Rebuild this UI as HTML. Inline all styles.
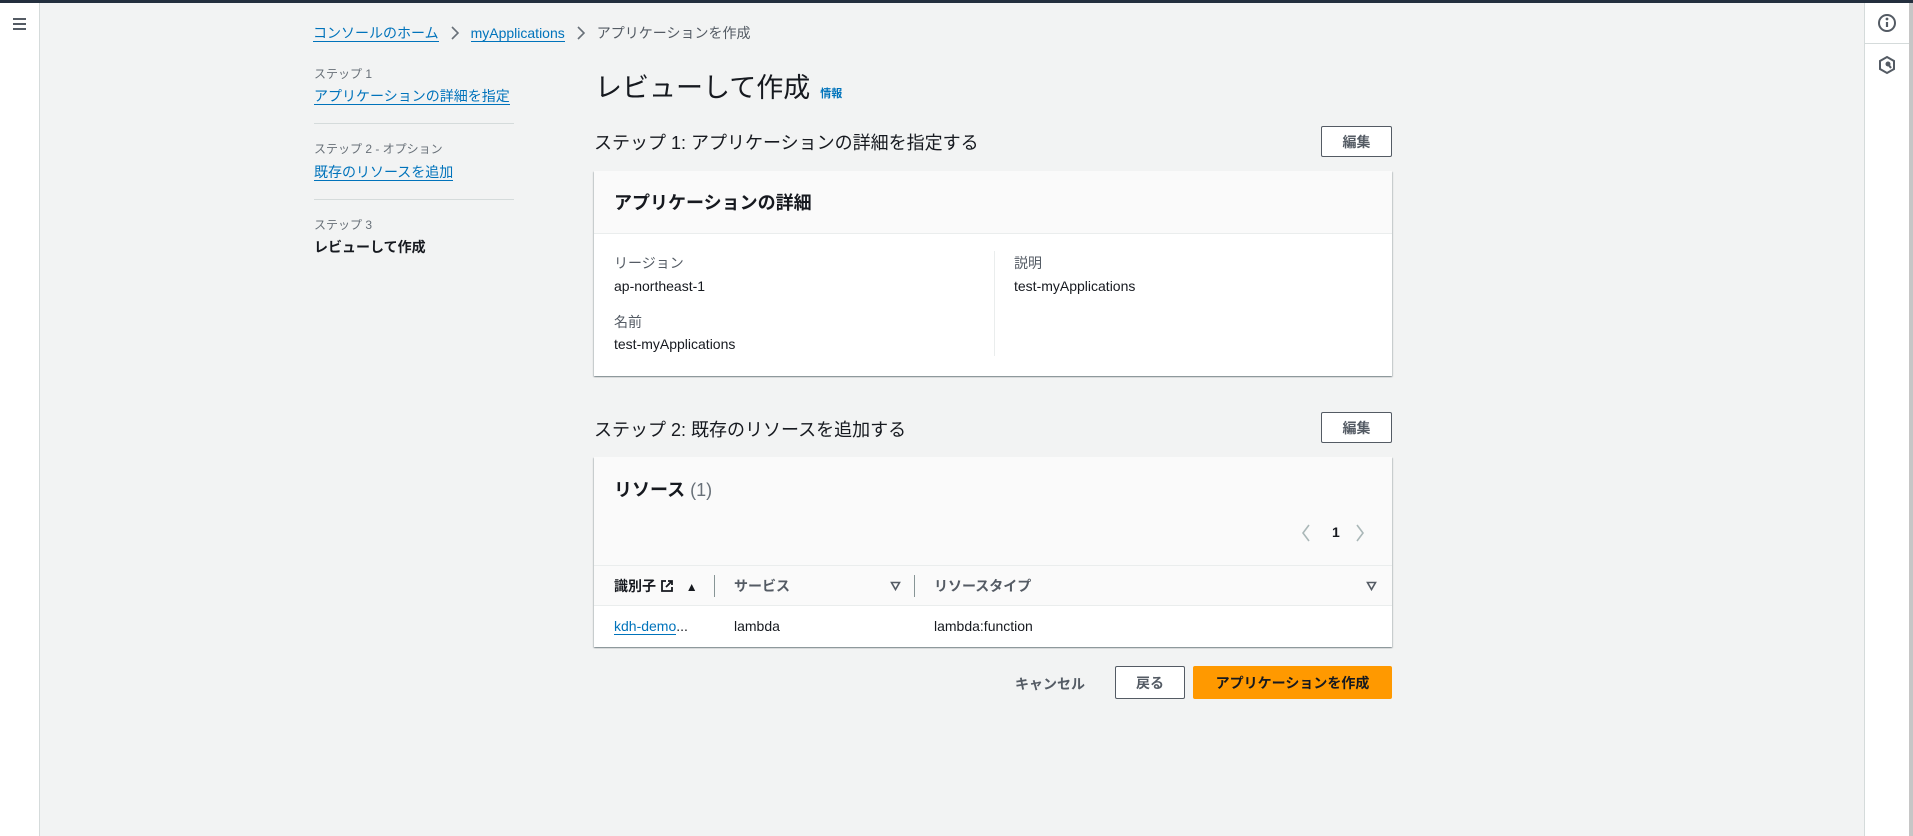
<!DOCTYPE html>
<html><head><meta charset="utf-8"><style>
*{box-sizing:border-box;margin:0;padding:0}
body{width:1913px;height:836px;overflow:hidden;background:#f2f3f3;font-family:"Liberation Sans","Noto Sans CJK JP",sans-serif;color:#16191f;font-size:14px;position:relative}
.abs{position:absolute}
a{color:#0073bb;text-decoration:none;border-bottom:1px solid #0073bb}
.topbar{left:0;top:0;width:1913px;height:3px;background:#232f3e}
.leftnav{left:0;top:3px;width:40px;height:833px;background:#fff;border-right:1px solid #d5dbdb}
.rightnav{left:1864px;top:3px;width:45px;height:833px;background:#fff;border-left:1px solid #d5dbdb}
.scroll{left:1909px;top:3px;width:4px;height:833px;background:#c6c6c6}
.btn{position:absolute;background:#fff;border:1px solid #545b64;font-weight:bold;color:#545b64;font-size:14px;display:flex;align-items:center;justify-content:center;border-radius:2px}
.card{position:absolute;background:#fff;box-shadow:0 1px 1px rgba(0,28,36,.3),1px 1px 1px rgba(0,28,36,.15),-1px 1px 1px rgba(0,28,36,.15)}
.lbl{color:#545b64}
.small{font-size:12px;color:#687078}
.chev{display:inline-block;vertical-align:-2px;margin:0 12px}
</style></head><body>
<div class="abs topbar"></div>
<div class="abs leftnav">
<svg class="abs" style="left:12px;top:14px" width="16" height="14"><path d="M1 2h13M1 7h13M1 12h13" stroke="#545b64" stroke-width="2"/></svg>
</div>
<div class="abs rightnav">
<svg class="abs" style="left:12px;top:10px" width="20" height="20"><circle cx="10" cy="10" r="8" fill="none" stroke="#545b64" stroke-width="2"/><circle cx="10" cy="6" r="1.4" fill="#545b64"/><path d="M10 9v5" stroke="#545b64" stroke-width="2.2"/></svg>
<div class="abs" style="left:0;top:40px;width:45px;height:1px;background:#d5dbdb"></div>
<svg class="abs" style="left:12px;top:52px" width="20" height="20"><path d="M10 2l7 4v8l-7 4-7-4V6z" fill="none" stroke="#545b64" stroke-width="2"/><circle cx="11" cy="9" r="2.5" fill="#545b64"/><path d="M11 9l3 4" stroke="#545b64" stroke-width="2"/></svg>
</div>
<div class="abs scroll"></div>

<div class="abs" style="left:313px;top:23px;font-size:14px;white-space:nowrap">
<a>コンソールのホーム</a><svg class="chev" width="8" height="14"><path d="M1 1l6 6-6 6" fill="none" stroke="#687078" stroke-width="1.6"/></svg><a>myApplications</a><svg class="chev" width="8" height="14"><path d="M1 1l6 6-6 6" fill="none" stroke="#687078" stroke-width="1.6"/></svg><span style="color:#545b64">アプリケーションを作成</span>
</div>

<div class="abs small" style="left:314px;top:65px">ステップ 1</div>
<div class="abs" style="left:314px;top:86px"><a>アプリケーションの詳細を指定</a></div>
<div class="abs" style="left:314px;top:123px;width:200px;height:1px;background:#d5dbdb"></div>
<div class="abs small" style="left:314px;top:140px">ステップ 2 - オプション</div>
<div class="abs" style="left:314px;top:162px"><a>既存のリソースを追加</a></div>
<div class="abs" style="left:314px;top:199px;width:200px;height:1px;background:#d5dbdb"></div>
<div class="abs small" style="left:314px;top:216px">ステップ 3</div>
<div class="abs" style="left:314px;top:237px;font-weight:bold">レビューして作成</div>

<div class="abs" style="left:595px;top:66px;font-size:27px;white-space:nowrap">レビューして作成<span style="font-size:11px;color:#0073bb;font-weight:bold;margin-left:10px">情報</span></div>

<div class="abs" style="left:594px;top:129px;font-size:18px">ステップ 1: アプリケーションの詳細を指定する</div>
<div class="btn" style="left:1321px;top:126px;width:71px;height:31px">編集</div>
<div class="card" style="left:594px;top:171px;width:798px;height:205px">
<div style="height:63px;background:#fafafa;border-bottom:1px solid #eaeded;padding:18px 20px;font-size:18px;font-weight:bold">アプリケーションの詳細</div>
<div class="abs lbl" style="left:20px;top:82px">リージョン</div>
<div class="abs" style="left:20px;top:107px">ap-northeast-1</div>
<div class="abs lbl" style="left:20px;top:141px">名前</div>
<div class="abs" style="left:20px;top:165px">test-myApplications</div>
<div class="abs" style="left:400px;top:80px;width:1px;height:105px;background:#eaeded"></div>
<div class="abs lbl" style="left:420px;top:82px">説明</div>
<div class="abs" style="left:420px;top:107px">test-myApplications</div>
</div>

<div class="abs" style="left:594px;top:416px;font-size:18px">ステップ 2: 既存のリソースを追加する</div>
<div class="btn" style="left:1321px;top:412px;width:71px;height:31px">編集</div>
<div class="card" style="left:594px;top:457px;width:798px;height:190px;background:#fafafa">
<div class="abs" style="left:20px;top:19px;font-size:18px;font-weight:bold">リソース <span style="font-weight:normal;color:#687078">(1)</span></div>
<svg class="abs" style="left:707px;top:67px" width="10" height="18"><path d="M8 1L2 9l6 8" fill="none" stroke="#aab7b8" stroke-width="1.6"/></svg>
<div class="abs" style="left:738px;top:67px;font-weight:bold">1</div>
<svg class="abs" style="left:761px;top:67px" width="10" height="18"><path d="M2 1l6 8-6 8" fill="none" stroke="#aab7b8" stroke-width="1.6"/></svg>
<div class="abs" style="left:0;top:108px;width:798px;height:41px;border-top:1px solid #eaeded;border-bottom:1px solid #eaeded"></div>
<div class="abs" style="left:20px;top:119px;font-weight:bold;white-space:nowrap">識別子 <svg width="14" height="14" style="vertical-align:-2px"><path d="M6 2H2v10h10V8M8 2h4v4M12 2L6 8" fill="none" stroke="#16191f" stroke-width="1.8"/></svg> <span style="margin-left:8px;font-size:12px">▲</span></div>
<div class="abs" style="left:120px;top:118px;width:1px;height:22px;background:#879596"></div>
<div class="abs" style="left:140px;top:119px;font-weight:bold;color:#545b64">サービス</div>
<svg class="abs" style="left:296px;top:124px" width="11" height="10"><path d="M1.5 1.5h8L5.5 8.5z" fill="none" stroke="#545b64" stroke-width="1.6"/></svg>
<div class="abs" style="left:320px;top:118px;width:1px;height:22px;background:#879596"></div>
<div class="abs" style="left:340px;top:119px;font-weight:bold;color:#545b64">リソースタイプ</div>
<svg class="abs" style="left:772px;top:124px" width="11" height="10"><path d="M1.5 1.5h8L5.5 8.5z" fill="none" stroke="#545b64" stroke-width="1.6"/></svg>
<div class="abs" style="left:0;top:149px;width:798px;height:41px;background:#fff"></div>
<div class="abs" style="left:20px;top:161px"><a>kdh-demo</a>...</div>
<div class="abs" style="left:140px;top:161px">lambda</div>
<div class="abs" style="left:340px;top:161px">lambda:function</div>
</div>

<div class="abs" style="left:1015px;top:674px;font-weight:bold;color:#545b64">キャンセル</div>
<div class="btn" style="left:1115px;top:666px;width:70px;height:33px">戻る</div>
<div class="btn" style="left:1193px;top:666px;width:199px;height:33px;background:#ff9900;border-color:#ff9900;color:#16191f">アプリケーションを作成</div>
</body></html>
